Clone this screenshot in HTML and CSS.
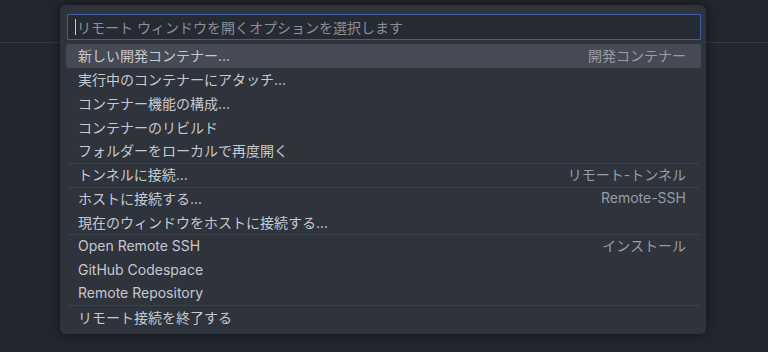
FILE: index.html
```html
<!DOCTYPE html>
<html lang="ja">
<head>
<meta charset="utf-8">
<link rel="stylesheet" href="styles.css">
</head>
<body>
<div class="header"></div>
<div class="quick-pick">
  <div class="input-box">
    <span class="caret"></span>
    <span class="placeholder">リモート ウィンドウを開くオプションを選択します</span>
  </div>
  <div class="list">
    <div class="row selected"><span class="label">新しい開発コンテナー...</span><span class="desc">開発コンテナー</span></div>
    <div class="row"><span class="label">実行中のコンテナーにアタッチ...</span></div>
    <div class="row"><span class="label">コンテナー機能の構成...</span></div>
    <div class="row"><span class="label">コンテナーのリビルド</span></div>
    <div class="row"><span class="label">フォルダーをローカルで再度開く</span></div>
    <div class="row sep"><span class="label">トンネルに接続...</span><span class="desc">リモート-トンネル</span></div>
    <div class="row sep"><span class="label">ホストに接続する...</span><span class="desc">Remote-SSH</span></div>
    <div class="row"><span class="label">現在のウィンドウをホストに接続する...</span></div>
    <div class="row sep"><span class="label">Open Remote SSH</span><span class="desc">インストール</span></div>
    <div class="row"><span class="label">GitHub Codespace</span></div>
    <div class="row"><span class="label">Remote Repository</span></div>
    <div class="row sep"><span class="label">リモート接続を終了する</span></div>
  </div>
</div>
</body>
</html>
```
FILE: styles.css
```css
html, body {
  margin: 0;
  padding: 0;
  width: 768px;
  height: 352px;
  background: #23262e;
  overflow: hidden;
  font-family: Inter, "Noto Sans CJK JP", sans-serif;
  font-size: 14px;
}
.header {
  position: absolute;
  left: 0;
  top: 0;
  width: 768px;
  height: 43px;
  border-bottom: 1px solid #353943;
  box-sizing: border-box;
}
.quick-pick {
  position: absolute;
  left: 60px;
  top: 5px;
  width: 646px;
  height: 329px;
  box-sizing: border-box;
  background: #2f333c;
  border-radius: 6px;
  box-shadow: 0 0 10px 2px rgba(0, 0, 0, 0.35);
  padding: 9px 5px 5px 6px;
  display: flex;
  flex-direction: column;
}
.input-box {
  height: 26px;
  margin-left: 1px;
  box-sizing: border-box;
  border: 1px solid #3f5ea8;
  background: #262a33;
  display: flex;
  align-items: center;
  padding-left: 7px;
  gap: 1px;
}
.caret {
  width: 1px;
  height: 16px;
  background: #c8ccd2;
}
.placeholder {
  color: #8b8f97;
  font-size: 14px;
}
.list {
  margin-top: 4px;
  display: flex;
  flex-direction: column;
}
.row {
  height: 23.75px;
  display: flex;
  align-items: center;
  justify-content: space-between;
  padding: 0 15px 0 12px;
  color: #c6c9cf;
  border-radius: 3px;
  position: relative;
}
.row .label, .row .desc {
  position: relative;
  top: -0.5px;
}
.row.selected {
  background: #454a55;
}
.row.sep::before {
  content: "";
  position: absolute;
  left: 2px;
  right: 2px;
  top: 0;
  height: 1px;
  background: #3d414b;
}
.desc {
  color: #989ca4;
}
```
